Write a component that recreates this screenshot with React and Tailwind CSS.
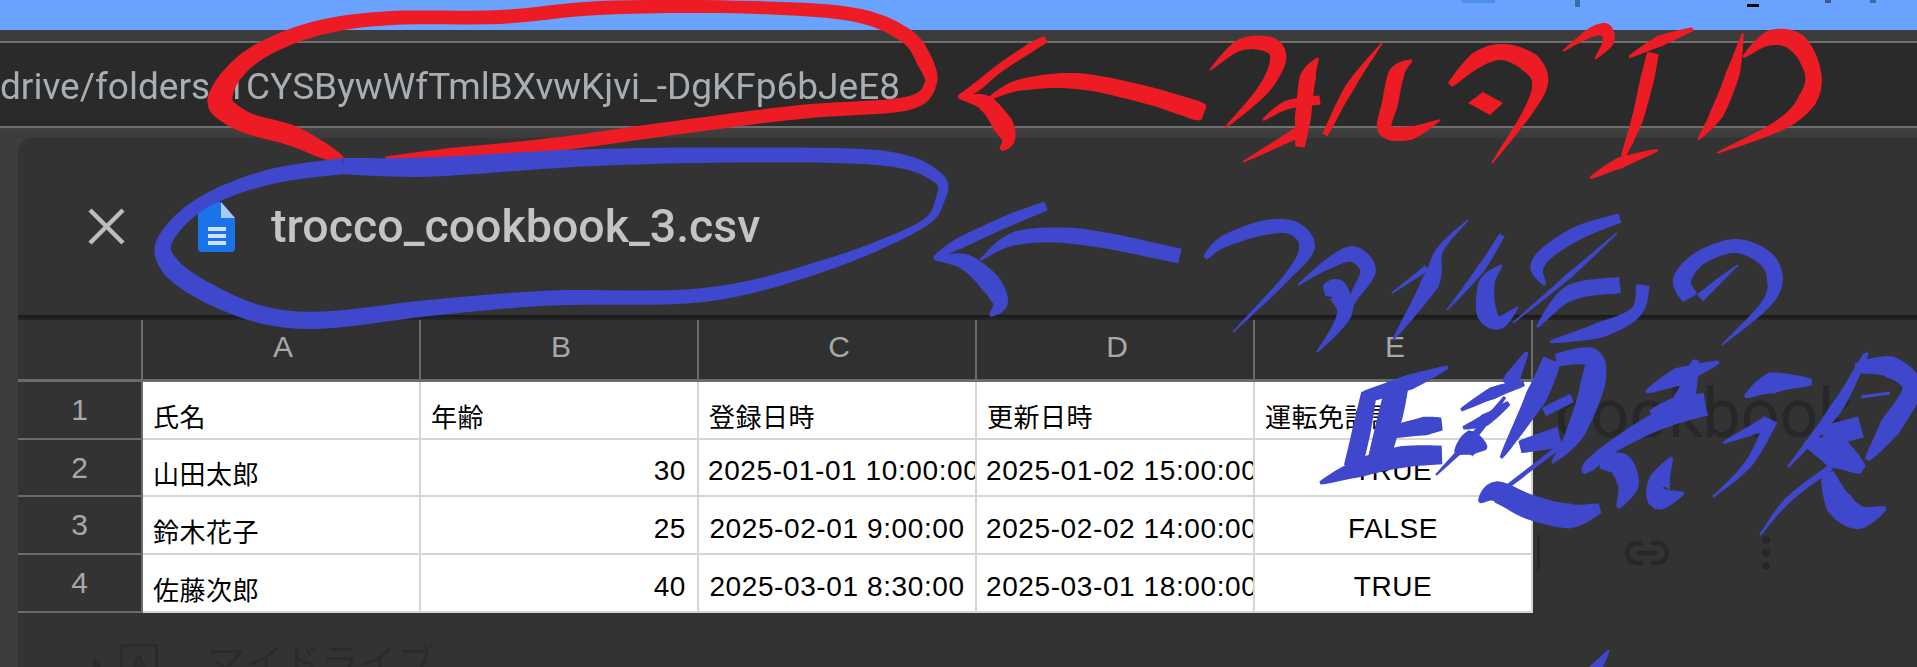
import React from 'react'
import { Link2, EllipsisVertical } from 'lucide-react'

const columns = ['A', 'B', 'C', 'D', 'E']

const rows = [
  { id: 1, name: '氏名', age: '年齢', created: '登録日時', updated: '更新日時', license: '運転免許証', head: true },
  { id: 2, name: '山田太郎', age: '30', created: '2025-01-01 10:00:00', updated: '2025-01-02 15:00:00', license: 'TRUE' },
  { id: 3, name: '鈴木花子', age: '25', created: '2025-02-01 9:00:00', updated: '2025-02-02 14:00:00', license: 'FALSE' },
  { id: 4, name: '佐藤次郎', age: '40', created: '2025-03-01 8:30:00', updated: '2025-03-01 18:00:00', license: 'TRUE' },
]

// freehand marker strokes, each point is [x, y, width]
const redStrokes = [
  [[342,160,6],[322,150,14],[290,135,18],[250,124,18],[228,112,20],[220,100,22],[232,75,16],[262,50,14],[318,28,13],[392,18,12],[500,17,12],[600,8,12],[735,7,11],[850,14,12],[905,35,13],[925,62,14],[930,85,10],[905,104,12],[800,112,12],[674,128,12],[551,145,12],[450,155,12],[386,161,8]],
  [[915,103,2],[925,95,10],[932,85,8]],
  [[1046,39,6],[1030,48,8],[1000,68,7],[975,88,8],[958,97,2]],
  [[958,97,2],[985,103,14],[1003,125,18],[1008,140,12],[1001,150,3]],
  [[990,98,3],[1020,85,10],[1077,81,14],[1143,94,15],[1195,110,17],[1204,113,12]],
  [[1210,70,1],[1240,45,10],[1270,45,14],[1278,60,14],[1263,90,10],[1225,128,1]],
  [[1263,120,2],[1287,105,8],[1320,100,8]],
  [[1318,58,1],[1308,77,14],[1303,117,14],[1300,147,8]],
  [[1243,162,1],[1297,133,10]],
  [[1382,43,1],[1350,87,8],[1325,135,5]],
  [[1412,60,1],[1397,73,14],[1390,103,14],[1385,130,12],[1410,133,12],[1440,120,1]],
  [[1450,85,5],[1477,60,14],[1503,52,14],[1530,63,18],[1540,83,14],[1527,113,8],[1492,163,1]],
  [[1563,51,1],[1590,33,8],[1605,30,12],[1608,42,10],[1595,59,1]],
  [[1629,57,2],[1660,41,10],[1693,29,3]],
  [[1653,53,10],[1647,80,12],[1637,120,10],[1623,157,4]],
  [[1590,178,2],[1620,163,10],[1658,150,2]],
  [[1743,33,1],[1733,73,12],[1717,113,12],[1698,140,1]],
  [[1743,57,2],[1770,38,13],[1797,43,17],[1813,73,14],[1807,100,16],[1780,125,10],[1717,153,1]],
]

const blueStrokes = [
  [[343,166,14],[269,177,13],[202,203,11],[165,240,13],[171,267,17],[208,293,17],[263,315,15],[325,320,15],[429,308,14],[551,298,13],[704,295,12],[820,267,10],[918,227,6],[940,200,8],[937,177,10],[882,158,13],[735,155,13],[582,158,15],[429,167,17],[343,166,14]],
  [[1046,206,8],[1010,220,10],[960,243,10],[934,258,3]],
  [[934,258,3],[965,262,14],[990,283,18],[1000,303,14],[990,316,2]],
  [[980,260,1],[1017,238,12],[1083,237,14],[1180,256,13]],
  // ファイル名の
  [[1205,258,4],[1223,242,10],[1263,228,13],[1293,228,12],[1307,247,14],[1287,277,6],[1233,332,1]],
  [[1298,285,1],[1325,266,8],[1352,254,14],[1368,270,14],[1355,295,8],[1345,315,4]],
  [[1324,291,8],[1336,290,20],[1345,310,14],[1335,330,8],[1317,352,1]],
  [[1392,293,1],[1427,268,6]],
  [[1468,220,1],[1440,250,6],[1430,283,16],[1393,340,1]],
  [[1502,235,5],[1480,270,7],[1447,310,1]],
  [[1502,265,1],[1487,283,14],[1487,313,18],[1500,322,12],[1518,307,1]],
  [[1620,218,8],[1580,232,12],[1548,252,12],[1537,268,12],[1545,285,2]],
  [[1617,233,1],[1570,275,5],[1513,323,1]],
  [[1620,285,14],[1570,293,14],[1537,327,2]],
  [[1643,285,12],[1636,312,10],[1600,330,14],[1550,342,2]],
  [[1690,298,14],[1682,280,16],[1700,258,12],[1735,246,12],[1765,258,14],[1775,280,14],[1765,305,8],[1722,345,1]],
  [[1738,265,1],[1720,280,5],[1700,298,8]],
  [[1609,650,1],[1595,670,12]],
]

// 正規表現 is written with a heavier hand
const blueHeavy = [
  [[1448,367,2],[1410,382,10],[1365,397,8]],
  [[1398,383,14],[1391,413,16],[1377,467,14]],
  [[1369,393,10],[1361,433,12],[1353,467,12]],
  [[1392,432,8],[1425,426,12],[1442,424,8]],
  [[1320,483,2],[1359,468,12],[1402,457,14],[1442,455,12]],
  [[1524,383,4],[1493,393,8],[1461,410,2]],
  [[1509,403,3],[1485,420,8],[1463,428,2]],
  [[1505,397,2],[1473,437,5],[1436,475,1]],
  [[1455,453,2],[1471,444,18],[1487,448,2]],
  [[1527,352,2],[1513,377,10],[1507,385,8]],
  [[1556,360,8],[1591,357,12],[1593,383,16],[1575,433,12],[1552,463,1]],
  [[1552,360,12],[1536,397,14],[1501,458,2]],
  [[1572,398,6],[1544,412,6]],
  [[1560,437,14],[1520,447,8]],
  [[1564,443,3],[1507,487,3]],
  [[1479,502,2],[1496,492,14],[1530,507,16],[1570,516,16],[1600,508,6]],
  [[1719,362,2],[1678,377,12],[1646,392,2]],
  [[1705,402,12],[1674,407,12],[1650,412,2]],
  [[1696,360,4],[1684,400,14],[1670,417,5]],
  [[1705,405,14],[1660,420,12],[1615,445,8],[1590,465,8],[1583,473,2]],
  [[1600,462,8],[1620,465,16],[1628,485,14],[1618,508,2]],
  [[1672,457,1],[1660,480,14],[1660,498,16],[1684,493,1]],
  [[1812,382,4],[1772,383,14],[1745,397,2]],
  [[1772,420,8],[1749,463,5],[1713,497,1]],
  [[1768,423,10],[1723,443,1]],
  [[1865,353,2],[1863,360,4],[1835,410,8],[1788,467,1]],
  [[1855,368,6],[1890,367,14],[1912,388,12],[1890,427,14],[1867,460,3]],
  [[1823,437,14],[1861,427,14]],
  [[1890,393,2],[1861,397,2]],
  [[1804,443,2],[1835,452,22],[1863,470,6]],
  [[1827,473,8],[1839,503,18],[1859,517,16],[1886,508,2]],
  [[1831,467,4],[1788,500,4],[1760,535,1]],
]

// smooth the points and turn them into a filled shape with varying width
function brushPath(points, weight = 1.15) {
  const samples = []
  for (let i = 0; i < points.length - 1; i++) {
    const p0 = points[Math.max(i - 1, 0)]
    const p1 = points[i]
    const p2 = points[i + 1]
    const p3 = points[Math.min(i + 2, points.length - 1)]
    for (let s = 0; s < 8; s++) {
      const t = s / 8
      const at = (k) =>
        0.5 * (2 * p1[k] + (p2[k] - p0[k]) * t + (2 * p0[k] - 5 * p1[k] + 4 * p2[k] - p3[k]) * t * t + (3 * p1[k] - p0[k] - 3 * p2[k] + p3[k]) * t * t * t)
      samples.push([at(0), at(1), p1[2] + (p2[2] - p1[2]) * t])
    }
  }
  samples.push(points[points.length - 1])
  const left = []
  const right = []
  samples.forEach((p, i) => {
    const a = samples[Math.max(i - 1, 0)]
    const b = samples[Math.min(i + 1, samples.length - 1)]
    const dx = b[0] - a[0]
    const dy = b[1] - a[1]
    const len = Math.hypot(dx, dy) || 1
    const half = (Math.max(p[2], 1.5) * weight) / 2
    const nx = (-dy / len) * half
    const ny = (dx / len) * half
    left.push(`${(p[0] + nx).toFixed(1)} ${(p[1] + ny).toFixed(1)}`)
    right.unshift(`${(p[0] - nx).toFixed(1)} ${(p[1] - ny).toFixed(1)}`)
  })
  return `M${left.join('L')}L${right.join('L')}Z`
}

const Annotations = () => (
  <svg
    className="absolute inset-0 z-10"
    width="1917"
    height="667"
    viewBox="0 0 1917 667"
    role="img"
    aria-label="フォルダID ファイル名の正規表現"
  >
    <g fill="#ed1c24">
      {redStrokes.map((s, i) => <path key={i} d={brushPath(s)} />)}
      <polygon points="1468,103 1483,92 1503,103 1490,115" />
    </g>
    <g fill="#3f48cc">
      {blueStrokes.map((s, i) => <path key={i} d={brushPath(s)} />)}
      {blueHeavy.map((s, i) => <path key={i} d={brushPath(s, 1.55)} />)}
    </g>
  </svg>
)

const DocIcon = () => (
  <svg width="37" height="50" viewBox="0 0 37 50" className="shrink-0">
    <path d="M4 0H23L37 16V46a4 4 0 0 1-4 4H4a4 4 0 0 1-4-4V4a4 4 0 0 1 4-4Z" fill="#1a73e8" />
    <path d="M23 0L37 16H23Z" fill="#a9c9f5" />
    <path d="M10 25H28V29H10ZM10 32H28V36H10ZM10 39H28V43H10Z" fill="#cfe0fa" />
  </svg>
)

const RowCell = ({ row, col }) => {
  const text = row[col]
  let align = 'text-center px-[9px]'
  if (row.head || col === 'name') align = 'text-left px-[10px]'
  else if (col === 'age') align = 'text-right pr-[11px]'
  const tall = row.head || col === 'name'
  return (
    <div className={`flex items-end border-r-2 border-b-2 border-[#d6d6d6] bg-white text-black overflow-hidden ${tall ? 'pb-0' : 'pb-[3px]'}`}>
      <div className={`w-full whitespace-nowrap overflow-hidden ${align} ${tall ? 'text-[26px] tracking-[0.5px]' : 'text-[28px] tracking-[0.6px]'}`}>
        {text}
      </div>
    </div>
  )
}

const App = () => {
  return (
    <div className="relative w-[1917px] h-[667px] overflow-hidden bg-[#3d3d3d] font-['Liberation_Sans','Noto_Sans_CJK_JP',sans-serif]">
      <Annotations />

      <div className="relative h-[30px] bg-[#6aa3ff] overflow-hidden">
        <div className="absolute left-[1462px] top-0 h-[3px] w-[33px] bg-[#4c8df0]"></div>
        <div className="absolute left-[1575px] top-0 h-[7px] w-[5px] bg-[#3a6ea5]"></div>
        <div className="absolute left-[1747px] top-[4px] h-[3px] w-[12px] bg-black"></div>
        <div className="absolute left-[1825px] top-0 h-[3px] w-[6px] bg-[#3a5a90]"></div>
        <div className="absolute left-[1870px] top-0 h-[3px] w-[6px] bg-[#3a6ea5]"></div>
      </div>

      <div className="h-[11px] bg-[#3c3c3c]"></div>
      <div className="h-[87px] bg-[#2a2a2a] border-y-[2px] border-[#6e6e6e] flex items-center overflow-hidden pt-[4px]">
        <span className="font-['Roboto'] text-[37px] text-[#a7afb5] whitespace-nowrap blur-[0.4px]">
          drive/folders/1CYSBywWfTmlBXvwKjvi_-DgKFp6bJeE8
        </span>
      </div>
      <div className="h-[10px] bg-gradient-to-b from-[#414141] to-[#3a3a3a]"></div>

      <div className="ml-[18px] h-[529px] rounded-tl-[14px] bg-[#333333] flex flex-col overflow-hidden">
        <div className="h-[177px] shrink-0 flex items-center pl-[70px]">
          <svg width="37" height="37" viewBox="0 0 37 37" className="shrink-0 mr-[73px]">
            <path d="M2 2L35 35M35 2L2 35" stroke="#bdbdbd" strokeWidth="4.5" />
          </svg>
          <DocIcon />
          <span className="ml-[36px] font-['Roboto'] font-medium text-[46.5px] text-[#c4c4c4] blur-[0.4px]">trocco_cookbook_3.csv</span>
        </div>
        <div className="h-[5px] shrink-0 bg-gradient-to-b from-[#191919] to-[#262626]"></div>

        <div className="flex flex-1 min-h-0">
          <div className="w-[1515px] shrink-0 grid grid-cols-[125px_repeat(5,278px)] grid-rows-[62px_58px_57px_58px_58px] content-start">
            <div className="border-r-2 border-b-[3px] border-[#6b6b6b] bg-[#333333]"></div>
            {columns.map((c) => (
              <div key={c} className="flex items-start justify-center pt-[4px] pl-[4px] border-r-2 border-b-[3px] border-[#6b6b6b] bg-[#303030] text-[30px] text-[#a8a8a8]">
                {c}
              </div>
            ))}
            {rows.map((row) => (
              <React.Fragment key={row.id}>
                <div className="flex items-start justify-center pt-[5px] border-r-2 border-b-2 border-[#6b6b6b] bg-[#333333] text-[30px] text-[#a8a8a8]">
                  {row.id}
                </div>
                <RowCell row={row} col="name" />
                <RowCell row={row} col="age" />
                <RowCell row={row} col="created" />
                <RowCell row={row} col="updated" />
                <RowCell row={row} col="license" />
              </React.Fragment>
            ))}
            <div className="col-span-6 mt-[31px] flex items-start pl-[75px] text-[#2b2b2b]">
              <div className="w-0 h-0 mt-[14px] mr-[19px] border-y-[8px] border-y-transparent border-l-[8px] border-l-[#292929]"></div>
              <div className="flex h-[40px] w-[38px] justify-center border-[3px] border-[#2b2b2b] text-[24px] font-bold">A</div>
              <span className="ml-[49px] text-[38px] leading-[38px]">マイドライブ</span>
            </div>
          </div>

          <div className="flex-1 min-w-0 overflow-hidden pt-[60px] text-[#272727]">
            <div className="font-['Roboto'] text-[68px] leading-[68px] pl-[22px] whitespace-nowrap blur-[0.5px]">cookbook</div>
            <div className="mt-[81px] flex items-center pl-[3px] blur-[0.5px]">
              <div className="h-[36px] w-[4px] rounded-br-md border-r-[3px] border-[#272727]"></div>
              <Link2 size={48} strokeWidth={2.2} className="ml-[83px]" />
              <EllipsisVertical size={44} strokeWidth={2.4} className="ml-[73px]" />
            </div>
          </div>
        </div>
      </div>
    </div>
  )
}

export default App
